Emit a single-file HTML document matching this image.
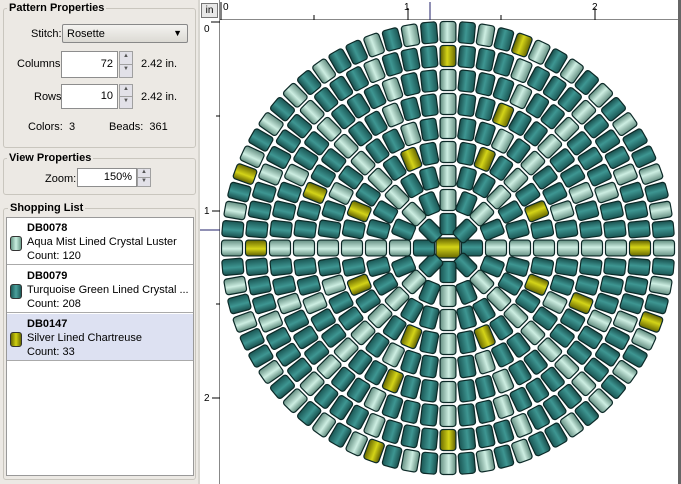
<!DOCTYPE html>
<html><head><meta charset="utf-8"><style>
*{margin:0;padding:0;box-sizing:border-box}
body{width:681px;height:484px;overflow:hidden;background:#ece9e4;font-family:"Liberation Sans",sans-serif;font-size:11px;color:#000;position:relative}
.abs{position:absolute}
.grp{position:absolute;border:1px solid #c9c6be;border-radius:3px}
.gt{position:absolute;font-weight:bold;background:#ece9e4;padding:0 2px;font-size:11px}
.inp{position:absolute;background:#fff;border:1px solid #8d8d8d;text-align:right;padding-right:4px}
.sp{position:absolute;width:14px;border:1px solid #a0a0a0;background:#e2e1e8}
.sp div{height:50%;border-bottom:1px solid #a0a0a0;font-size:6px;text-align:center;color:#555;line-height:9px}
.it{position:absolute;left:7px;width:186px;height:47px;border-bottom:1px solid #aaa;padding-left:20px;line-height:14px;padding-top:3px}
.sw{position:absolute;left:3px;top:18px;width:12px;height:15px;border:1px solid #333;border-radius:3px}
</style></head><body>
<div class="grp" style="left:3px;top:8px;width:193px;height:140px"></div>
<div class="gt" style="left:7px;top:2px">Pattern Properties</div>
<div class="abs" style="left:31px;top:28px">Stitch:</div>
<div class="abs" style="left:62px;top:24px;width:126px;height:19px;border:1px solid #888;border-radius:2px;background:linear-gradient(#f4f3f0,#dcdad4);padding:3px 4px">Rosette<span style="position:absolute;right:5px;top:3px;font-size:9px">▼</span></div>
<div class="abs" style="left:17px;top:58px">Columns:</div>
<div class="inp" style="left:61px;top:51px;width:57px;height:27px;line-height:25px">72</div>
<div class="sp" style="left:119px;top:51px;height:27px"><div>▲</div><div style="border:0">▼</div></div>
<div class="abs" style="left:141px;top:58px">2.42 in.</div>
<div class="abs" style="left:34px;top:91px">Rows:</div>
<div class="inp" style="left:61px;top:84px;width:57px;height:25px;line-height:23px">10</div>
<div class="sp" style="left:119px;top:84px;height:25px"><div>▲</div><div style="border:0">▼</div></div>
<div class="abs" style="left:141px;top:91px">2.42 in.</div>
<div class="abs" style="left:28px;top:121px">Colors:&nbsp; 3</div>
<div class="abs" style="left:109px;top:121px">Beads:&nbsp; 361</div>
<div class="grp" style="left:3px;top:158px;width:193px;height:37px"></div>
<div class="gt" style="left:7px;top:152px">View Properties</div>
<div class="abs" style="left:45px;top:173px">Zoom:</div>
<div class="inp" style="left:77px;top:168px;width:60px;height:19px;line-height:17px">150%</div>
<div class="sp" style="left:137px;top:168px;height:19px"><div style="line-height:7px">▲</div><div style="border:0;line-height:7px">▼</div></div>
<div class="grp" style="left:3px;top:208px;width:193px;height:272px"></div>
<div class="gt" style="left:8px;top:202px">Shopping List</div>
<div class="abs" style="left:6px;top:217px;width:188px;height:259px;background:#fff;border:1px solid #999"></div>
<div class="it" style="top:218px"><div class="sw" style="background:linear-gradient(90deg,#6a9a88,#c8eee0,#6a9a88)"></div><b>DB0078</b><br>Aqua Mist Lined Crystal Luster<br>Count: 120</div>
<div class="it" style="top:266px"><div class="sw" style="background:linear-gradient(90deg,#1c5a58,#4aa09c,#1c5a58)"></div><b>DB0079</b><br>Turquoise Green Lined Crystal ...<br>Count: 208</div>
<div class="it" style="top:314px;background:#dde1f2"><div class="sw" style="background:linear-gradient(90deg,#6a6a00,#d0d010,#6a6a00)"></div><b>DB0147</b><br>Silver Lined Chartreuse<br>Count: 33</div>
<div class="abs" style="left:198px;top:0;width:2px;height:484px;background:#d8d6d0"></div>
<div class="abs" style="left:200px;top:0;width:481px;height:484px;background:#fff;border-right:3px solid #666"></div>
<div class="abs" style="left:200px;top:0;width:478px;height:20px;background:#fff;border-bottom:1px solid #888"></div>
<div class="abs" style="left:200px;top:0;width:20px;height:484px;background:#fff;border-right:1px solid #888"></div>
<div class="abs" style="left:201px;top:3px;width:17px;height:15px;border:1px solid #777;background:#e8e8e8;font-size:10px;text-align:center;line-height:13px">in</div>
<svg class="abs" style="left:0;top:0" width="681" height="484">
<g stroke="#000" stroke-width="1" font-size="10" font-family="Liberation Sans">
<line x1="221" y1="2" x2="221" y2="20"/><text x="223" y="10" stroke="none">0</text>
<line x1="408" y1="8" x2="408" y2="20"/><text x="404" y="10" stroke="none">1</text>
<line x1="595" y1="8" x2="595" y2="20"/><text x="592" y="10" stroke="none">2</text>
<line x1="314" y1="15" x2="314" y2="20"/><line x1="501" y1="15" x2="501" y2="20"/>
<line x1="211" y1="22" x2="220" y2="22"/><text x="204" y="32" stroke="none">0</text>
<line x1="212" y1="211" x2="220" y2="211"/><text x="204" y="214" stroke="none">1</text>
<line x1="212" y1="398" x2="220" y2="398"/><text x="204" y="401" stroke="none">2</text>
<line x1="216" y1="116" x2="220" y2="116"/><line x1="216" y1="304" x2="220" y2="304"/>
<line x1="200" y1="230" x2="220" y2="230" stroke="#22226a"/>
<line x1="430" y1="2" x2="430" y2="20" stroke="#22226a"/>
</g>
<defs>
<linearGradient id="gD" x1="0" x2="1"><stop offset="0" stop-color="#184e4c"/><stop offset=".45" stop-color="#3e9692"/><stop offset="1" stop-color="#1a5654"/></linearGradient>
<linearGradient id="gL" x1="0" x2="1"><stop offset="0" stop-color="#5e8a7c"/><stop offset=".45" stop-color="#cdeee2"/><stop offset="1" stop-color="#658f82"/></linearGradient>
<linearGradient id="gY" x1="0" x2="1"><stop offset="0" stop-color="#5c5c00"/><stop offset=".45" stop-color="#d4d418"/><stop offset="1" stop-color="#666600"/></linearGradient>
</defs>
<g id="ros"></g>
</svg>
<script>
var g=document.getElementById('ros'),cx=448,cy=248,s='';
function bead(x,y,a,w,h,c){s+='<rect x="'+(-w/2)+'" y="'+(-h/2)+'" width="'+w+'" height="'+h+'" rx="3" fill="url(#g'+c+')" stroke="#0c2a28" stroke-width="1.2" transform="translate('+x.toFixed(1)+','+y.toFixed(1)+') rotate('+a.toFixed(1)+')"/>';}
bead(cx,cy,90,20,24,'Y');
for(var k=1;k<=9;k++){var n=8*k,r=24*k;for(var j=0;j<n;j++){var th=j*2*Math.PI/n,m=j%k,c='D';
if(m==0&&k>=2)c='L';
if(k>=5&&(m==Math.round(k/2)))c='L';
if(k==9&&(m==2||m==7))c='L';
if(k==8&&j%16==0)c='Y';
if(k==4&&m==2)c='Y';
if(k==6&&m==3&&j%12==3)c='Y';
if(k==9&&m==4&&j%18==4)c='Y';
var tw=Math.min(2*Math.PI*r/n-3,20);
bead(cx+r*Math.cos(th),cy+r*Math.sin(th),th*180/Math.PI+90,tw,21,c);}}
g.innerHTML=s;
</script>
</body></html>
